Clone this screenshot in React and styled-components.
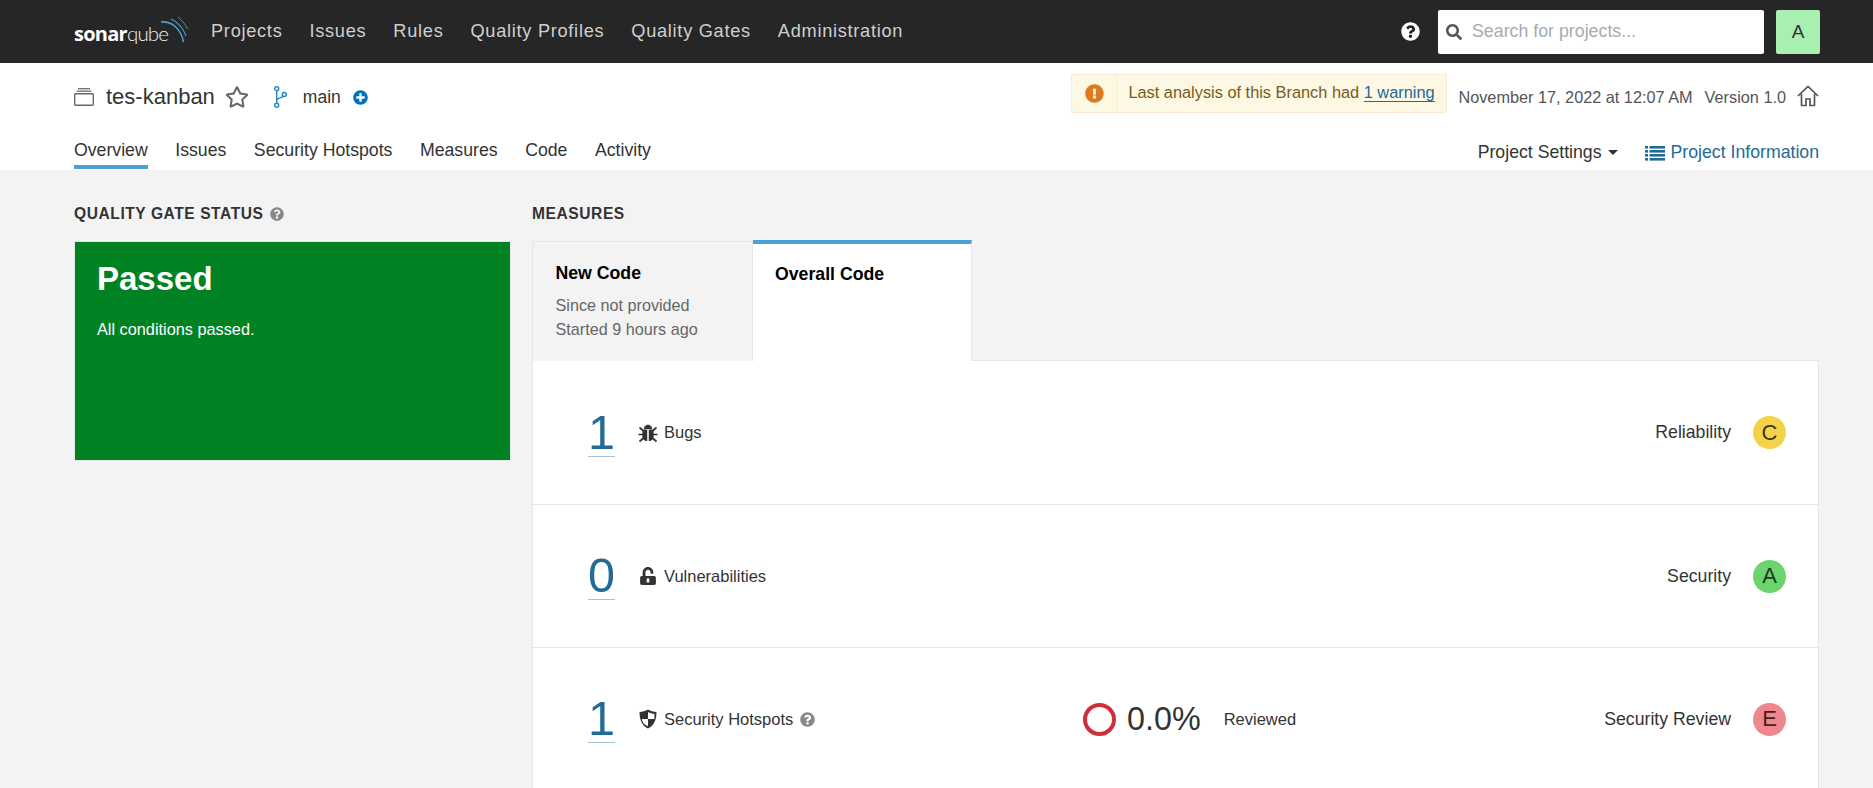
import React from 'react';
import styled, { createGlobalStyle } from 'styled-components';
import { FaExclamationCircle, FaPlusCircle, FaQuestionCircle, FaRegStar, FaSearch, FaUnlockAlt } from 'react-icons/fa';

const GlobalStyle = createGlobalStyle`
  html, body {
    margin: 0;
    padding: 0;
    height: 100%;
    overflow: hidden;
    background: #f3f3f3;
    font-family: "Liberation Sans", Arial, sans-serif;
    color: #333;
  }
  * { box-sizing: border-box; }
`;

const Page = styled.div`
  height: 788px;
  overflow: hidden;
`;

const TopBar = styled.header`
  height: 63px;
  background: #262626;
  display: flex;
  align-items: center;
  padding: 0 54px 0 74px;
`;

const Logo = styled.div`
  position: relative;
  width: 112px;
  height: 30px;
  margin-right: 25px;
  color: #fff;
  line-height: 32px;
  white-space: nowrap;

  b {
    font-family: "Open Sans", sans-serif;
    font-size: 20px;
    font-weight: 700;
    letter-spacing: -0.75px;
  }
  span {
    font-family: Lato, sans-serif;
    font-size: 20.5px;
    font-weight: 300;
    letter-spacing: -0.8px;
    color: #f0f0f0;
  }
  svg { position: absolute; left: 86px; top: -2px; }
`;

const MainNav = styled.nav`
  display: flex;
  gap: 27px;
`;

const NavLink = styled.a`
  font-size: 18.2px;
  letter-spacing: 0.72px;
  color: #cfcfcf;
`;

const TopRight = styled.div`
  margin-left: auto;
  display: flex;
  align-items: center;
`;

const HelpButton = styled.span`
  display: flex;
  color: #fff;
  font-size: 19px;
  margin-right: 18px;
`;

const SearchBox = styled.div`
  width: 326px;
  height: 44px;
  background: #fff;
  border-radius: 2px;
  display: flex;
  align-items: center;
  padding-left: 8px;
  gap: 10px;
  color: #555;
  font-size: 16px;
`;

const Placeholder = styled.span`
  font-size: 17.8px;
  color: #aaa;
`;

const Avatar = styled.div`
  width: 44px;
  height: 44px;
  margin: 0 -1px 0 12px;
  border-radius: 2px;
  background: #aaefb2;
  color: #333;
  font-size: 19px;
  display: flex;
  align-items: center;
  justify-content: center;
`;

const SubHeader = styled.div`
  height: 107px;
  background: #fff;
  padding: 11px 54px 0 74px;
`;

const ProjectRow = styled.div`
  display: flex;
  justify-content: space-between;
  align-items: flex-start;
  height: 46px;
`;

const Crumbs = styled.div`
  display: flex;
  align-items: center;
  height: 46px;
`;

const ProjectName = styled.span`
  font-size: 22px;
  color: #333;
  margin: 0 10px 0 12px;
`;

const StarIcon = styled.span`
  display: flex;
  color: #666;
  font-size: 24px;
  margin-right: 25px;
`;

const BranchName = styled.span`
  font-size: 17.5px;
  color: #333;
  margin: 0 12px 0 16px;
`;

const PlusIcon = styled.span`
  display: flex;
  color: #0271b9;
  font-size: 15px;
`;

const MetaBlock = styled.div`
  display: flex;
  align-items: flex-start;
`;

const Warning = styled.div`
  display: flex;
  height: 39px;
  width: 376px;
  background: #fcf8e3;
  border: 1px solid #faebcc;
  border-radius: 2px;
  color: #7a5a1c;
  font-size: 16.35px;
`;

const WarningIcon = styled.span`
  width: 45px;
  flex: none;
  display: flex;
  align-items: center;
  justify-content: center;
  border-right: 1px solid #faebcc;
  color: #e0781d;
  font-size: 19px;
`;

const WarningText = styled.span`
  padding-left: 11px;
  line-height: 35px;
  white-space: nowrap;

  a {
    color: #236a97;
    border-bottom: 1px solid #236a97;
  }
`;

const MetaText = styled.span`
  font-size: 16.27px;
  line-height: 46px;
  color: #555;
  margin-left: ${(p) => p.$gap}px;
  white-space: nowrap;
`;

const HomeIcon = styled.svg`
  width: 22px;
  height: 22px;
  margin: 11px 0 0 11px;
  color: #555;
`;

const TabsRow = styled.div`
  display: flex;
  justify-content: space-between;
  align-items: flex-start;
`;

const TabLinks = styled.div`
  display: flex;
  gap: 27.5px;
`;

const TabLink = styled.a`
  display: block;
  height: 49px;
  padding-top: 16px;
  line-height: 29px;
  font-size: 17.7px;
  color: #333;
  border-bottom: 4px solid ${(p) => (p.$active ? '#4b9fd5' : 'transparent')};
`;

const ProjectActions = styled.div`
  display: flex;
  align-items: center;
  padding-top: 18px;
  line-height: 29px;
  font-size: 17.7px;
`;

const SettingsLink = styled.a`
  color: #333;
  display: flex;
  align-items: center;
  gap: 6px;
  margin-right: 27px;

  &::after {
    content: '';
    border-left: 5px solid transparent;
    border-right: 5px solid transparent;
    border-top: 5px solid #333;
  }
`;

const InfoLink = styled.a`
  color: #236a97;
  display: flex;
  align-items: center;
  gap: 6px;
`;

const Content = styled.main`
  display: flex;
  gap: 21px;
  padding: 34px 54px 0 74px;
`;

const GateColumn = styled.section`
  width: 437px;
  flex: none;
`;

const MeasuresColumn = styled.section`
  flex: 1;
`;

const SectionTitle = styled.h3`
  display: flex;
  align-items: center;
  gap: 6px;
  margin: 0;
  height: 20px;
  font-size: 15.6px;
  font-weight: 700;
  letter-spacing: 0.55px;
  text-transform: uppercase;
  color: #333;

  svg { color: #888; font-size: 14px; }
`;

const GatePanel = styled.div`
  height: 220px;
  margin-top: 17px;
  background: #008223;
  border: 1px solid #e6e6e6;
  color: #fff;
  padding: 16px 22px;
`;

const GateTitle = styled.div`
  font-size: 33px;
  font-weight: 700;
  line-height: 42px;
`;

const GateNote = styled.div`
  margin-top: 17px;
  font-size: 16.3px;
  line-height: 24px;
`;

const CodeTabs = styled.div`
  display: flex;
  margin-top: 16px;
  position: relative;
  z-index: 1;
`;

const CodeTab = styled.div`
  width: ${(p) => (p.$active ? 219 : 221)}px;
  height: ${(p) => (p.$active ? 121 : 120)}px;
  padding: ${(p) => (p.$active ? '20px 22px' : '21px 22px 0 22.5px')};
  margin-top: ${(p) => (p.$active ? 0 : 1)}px;
  background: ${(p) => (p.$active ? '#fff' : '#f3f3f3')};
  border-top: ${(p) => (p.$active ? '4px solid #4b9fd5' : '1px solid #e6e6e6')};
  border-left: ${(p) => (p.$active ? 'none' : '1px solid #e6e6e6')};
  border-right: 1px solid #e6e6e6;
`;

const CodeTabTitle = styled.div`
  font-size: 17.7px;
  font-weight: 700;
  line-height: 21px;
  margin-bottom: 9px;
  color: #000;
`;

const CodeTabNote = styled.div`
  font-size: 16.2px;
  line-height: 24px;
  color: #666;
`;

const MeasuresPanel = styled.div`
  background: #fff;
  border: 1px solid #e6e6e6;
  margin-top: -1px;
`;

const MeasureRow = styled.div`
  height: 143px;
  display: flex;
  align-items: center;
  padding: 0 32px 0 55px;
  border-top: ${(p) => (p.$first ? 'none' : '1px solid #e6e6e6')};
`;

const MeasureMain = styled.div`
  width: 495px;
  flex: none;
  display: flex;
  align-items: center;
`;

const MeasureValue = styled.a`
  display: block;
  font-size: 48.5px;
  line-height: 47px;
  font-weight: 400;
  color: #236a97;
  border-bottom: 1px solid #a3c5dc;
`;

const MeasureIcon = styled.span`
  width: 20px;
  margin: 0 6px 0 23px;
  display: flex;
  justify-content: center;
  font-size: 18px;
  color: #333;
`;

const MeasureLabel = styled.span`
  font-size: 16.5px;
  color: #333;
`;

const LabelHelp = styled.span`
  display: flex;
  color: #888;
  font-size: 15px;
  margin-left: 7px;
`;

const ReviewedRing = styled.span`
  width: 33px;
  height: 33px;
  border: 4.5px solid #d02f3a;
  border-radius: 50%;
`;

const ReviewedValue = styled.span`
  font-size: 32.3px;
  color: #333;
  margin-left: 11px;
`;

const ReviewedLabel = styled.span`
  font-size: 16.5px;
  color: #333;
  margin-left: 23px;
`;

const RatingBlock = styled.div`
  margin-left: auto;
  display: flex;
  align-items: center;
  gap: 22px;
  font-size: 17.7px;
  color: #333;
`;

const ratingColors = {
  A: ['#6cd46c', '#1b3a1b'],
  C: ['#f4d348', '#3d3515'],
  E: ['#f0878e', '#4a1c20'],
};

const Rating = styled.span`
  width: 33px;
  height: 33px;
  border-radius: 50%;
  display: flex;
  align-items: center;
  justify-content: center;
  font-size: 22px;
  background: ${(p) => ratingColors[p.$grade][0]};
  color: ${(p) => ratingColors[p.$grade][1]};
`;

const LogoArcs = () => (
  <svg width="30" height="30" viewBox="0 0 30 30" fill="none">
    <path d="M1 7C12 6 21 14 23.5 27" stroke="#4b9fd5" strokeWidth="1.6" />
    <path d="M11 4C18 7 23 13 26 21" stroke="#4b9fd5" strokeWidth="1.1" />
    <path d="M18 2C22 5 25 9 27.5 14" stroke="#4b9fd5" strokeWidth="0.9" />
  </svg>
);

const ProjectIcon = () => (
  <svg width="20" height="18" viewBox="0 0 20 18" fill="none">
    <path d="M4 0.7H16" stroke="#777" strokeWidth="1.4" />
    <path d="M2.5 3.2H17.5" stroke="#777" strokeWidth="1.4" />
    <rect x="0.7" y="5.7" width="18.6" height="11.6" rx="1" stroke="#666" strokeWidth="1.4" />
  </svg>
);

const BranchIcon = () => (
  <svg width="13" height="22" viewBox="0 0 13 22" fill="none" stroke="#1f86c9" strokeWidth="1.4">
    <circle cx="2.7" cy="2.7" r="2" />
    <circle cx="2.7" cy="19.3" r="2" />
    <circle cx="10.3" cy="8.5" r="2" />
    <path d="M2.7 4.7V17.3M2.7 14.5C3 11.5 8 12 9.5 10.3" />
  </svg>
);

const ListIcon = () => (
  <svg width="20" height="16" viewBox="0 0 20 16" fill="#236a97">
    <rect x="0" y="1" width="3" height="2.6" />
    <rect x="4.5" y="1" width="15.5" height="2.6" />
    <rect x="0" y="5" width="3" height="2.6" />
    <rect x="4.5" y="5" width="15.5" height="2.6" />
    <rect x="0" y="9" width="3" height="2.6" />
    <rect x="4.5" y="9" width="15.5" height="2.6" />
    <rect x="0" y="13" width="3" height="2.6" />
    <rect x="4.5" y="13" width="15.5" height="2.6" />
  </svg>
);

const BugIcon = () => (
  <svg width="20" height="20" viewBox="0 0 20 20" fill="#333" stroke="#333">
    <path d="M6 6C6 0.5 14 0.5 14 6Z" strokeWidth="0.4" />
    <path d="M4.5 6.8H9.1V18C6.5 18 4.5 16.2 4.5 13.5Z" strokeWidth="0.2" />
    <path d="M15.5 6.8H10.9V18C13.5 18 15.5 16.2 15.5 13.5Z" strokeWidth="0.2" />
    <path d="M1.5 4.5L5 7.5M18.5 4.5L15 7.5M0.5 11.5H5M19.5 11.5H15M1.5 18.5L5.5 15M18.5 18.5L14.5 15" strokeWidth="1.7" fill="none" />
  </svg>
);

const ShieldIcon = () => (
  <svg width="18" height="20" viewBox="0 0 18 20">
    <path d="M9 0.5C11.5 2 14.5 3 17.5 3C17.5 10 15.5 16.5 9 19.5C2.5 16.5 0.5 10 0.5 3C3.5 3 6.5 2 9 0.5Z" fill="#333" />
    <path d="M9 3C11 4 13 4.8 15.5 5C15.5 7 15.5 8 15.2 10H9ZM9 10V17.3C5 15.7 3.2 13 2.8 10Z" fill="#fff" />
  </svg>
);

const navItems = ['Projects', 'Issues', 'Rules', 'Quality Profiles', 'Quality Gates', 'Administration'];
const tabItems = ['Overview', 'Issues', 'Security Hotspots', 'Measures', 'Code', 'Activity'];

const App = () => (
  <Page>
    <GlobalStyle />
    <TopBar>
      <Logo>
        <b>sonar</b><span>qube</span>
        <LogoArcs />
      </Logo>
      <MainNav>
        {navItems.map((item) => (
          <NavLink key={item}>{item}</NavLink>
        ))}
      </MainNav>
      <TopRight>
        <HelpButton><FaQuestionCircle /></HelpButton>
        <SearchBox>
          <FaSearch />
          <Placeholder>Search for projects...</Placeholder>
        </SearchBox>
        <Avatar>A</Avatar>
      </TopRight>
    </TopBar>

    <SubHeader>
      <ProjectRow>
        <Crumbs>
          <ProjectIcon />
          <ProjectName>tes-kanban</ProjectName>
          <StarIcon><FaRegStar /></StarIcon>
          <BranchIcon />
          <BranchName>main</BranchName>
          <PlusIcon><FaPlusCircle /></PlusIcon>
        </Crumbs>
        <MetaBlock>
          <Warning>
            <WarningIcon><FaExclamationCircle /></WarningIcon>
            <WarningText>Last analysis of this Branch had <a>1 warning</a></WarningText>
          </Warning>
          <MetaText $gap={11}>November 17, 2022 at 12:07 AM</MetaText>
          <MetaText $gap={12}>Version 1.0</MetaText>
          <HomeIcon viewBox="0 0 22 22" fill="none" stroke="currentColor" strokeWidth="1.7">
            <path d="M1 11L11 1.5L21 11M4.5 9V20.5H9V14H13V20.5H17.5V9" />
          </HomeIcon>
        </MetaBlock>
      </ProjectRow>
      <TabsRow>
        <TabLinks>
          {tabItems.map((item, i) => (
            <TabLink key={item} $active={i === 0}>{item}</TabLink>
          ))}
        </TabLinks>
        <ProjectActions>
          <SettingsLink>Project Settings</SettingsLink>
          <InfoLink><ListIcon />Project Information</InfoLink>
        </ProjectActions>
      </TabsRow>
    </SubHeader>

    <Content>
      <GateColumn>
        <SectionTitle>Quality Gate Status <FaQuestionCircle /></SectionTitle>
        <GatePanel>
          <GateTitle>Passed</GateTitle>
          <GateNote>All conditions passed.</GateNote>
        </GatePanel>
      </GateColumn>

      <MeasuresColumn>
        <SectionTitle>Measures</SectionTitle>
        <CodeTabs>
          <CodeTab>
            <CodeTabTitle>New Code</CodeTabTitle>
            <CodeTabNote>Since not provided</CodeTabNote>
            <CodeTabNote>Started 9 hours ago</CodeTabNote>
          </CodeTab>
          <CodeTab $active>
            <CodeTabTitle>Overall Code</CodeTabTitle>
          </CodeTab>
        </CodeTabs>
        <MeasuresPanel>
          <MeasureRow $first>
            <MeasureMain>
              <MeasureValue>1</MeasureValue>
              <MeasureIcon><BugIcon /></MeasureIcon>
              <MeasureLabel>Bugs</MeasureLabel>
            </MeasureMain>
            <RatingBlock>Reliability <Rating $grade="C">C</Rating></RatingBlock>
          </MeasureRow>
          <MeasureRow>
            <MeasureMain>
              <MeasureValue>0</MeasureValue>
              <MeasureIcon><FaUnlockAlt /></MeasureIcon>
              <MeasureLabel>Vulnerabilities</MeasureLabel>
            </MeasureMain>
            <RatingBlock>Security <Rating $grade="A">A</Rating></RatingBlock>
          </MeasureRow>
          <MeasureRow>
            <MeasureMain>
              <MeasureValue>1</MeasureValue>
              <MeasureIcon><ShieldIcon /></MeasureIcon>
              <MeasureLabel>Security Hotspots</MeasureLabel>
              <LabelHelp><FaQuestionCircle /></LabelHelp>
            </MeasureMain>
            <ReviewedRing />
            <ReviewedValue>0.0%</ReviewedValue>
            <ReviewedLabel>Reviewed</ReviewedLabel>
            <RatingBlock>Security Review <Rating $grade="E">E</Rating></RatingBlock>
          </MeasureRow>
        </MeasuresPanel>
      </MeasuresColumn>
    </Content>
  </Page>
);

export default App;
